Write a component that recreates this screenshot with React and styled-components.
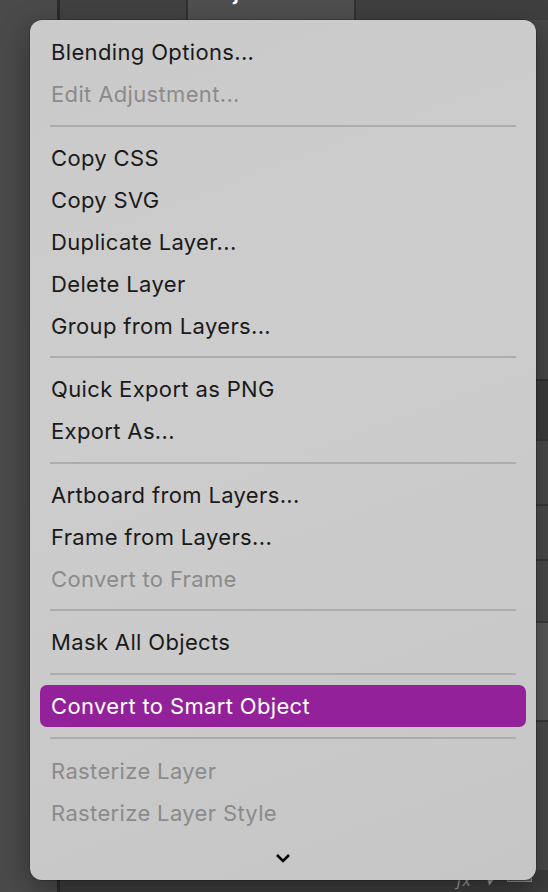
import React from 'react'
import styled, { createGlobalStyle } from 'styled-components'

const GlobalStyle = createGlobalStyle`
  html, body {
    margin: 0;
    padding: 0;
    background: #4a4a4a;
    overflow: hidden;
  }
  * {
    box-sizing: border-box;
  }
`

const Screen = styled.div`
  position: relative;
  width: 548px;
  height: 892px;
  overflow: hidden;
  display: flex;
  font-family: Inter, "Liberation Sans", sans-serif;
`

const Gutter = styled.div`
  width: 57px;
  background: #4a4a4a;
`

const Rule = styled.div`
  width: 3px;
  background: #2c2c2c;
`

const Panel = styled.div`
  flex: 1;
  display: flex;
  flex-direction: column;
`

const TabBar = styled.div`
  height: 20px;
  display: flex;
  background: #3f3f3f;
`

const Tab = styled.div`
  width: ${p => p.width}px;
  overflow: hidden;
  background: ${p => (p.active ? '#4f4f4f' : '#414141')};
  color: ${p => (p.active ? '#ffffff' : '#a8a8a8')};
  border-right: 2px solid #303030;
  font-size: 22px;
  line-height: 22px;
  font-weight: ${p => (p.active ? 600 : 400)};
  text-align: center;
  span {
    display: block;
    margin-top: -19px;
  }
`

const Band = styled.div`
  height: ${p => p.h}px;
  background: ${p => p.bg};
  border-top: ${p => (p.line ? `2px solid ${p.line}` : 'none')};
`

const Footer = styled.div`
  flex: 1;
  background: #3d3d3d;
  display: flex;
  align-items: flex-end;
  justify-content: flex-end;
  gap: 14px;
  padding: 0 16px 2px 0;
  color: #9a9a9a;
  font-size: 16px;
  font-style: italic;
`

const Swatch = styled.div`
  width: 25px;
  height: 12px;
  margin-bottom: 8px;
  background: #5e5e5e;
  border: 1px solid #8a8a8a;
`

const Menu = styled.div`
  position: absolute;
  left: 30px;
  top: 20px;
  width: 506px;
  height: 860px;
  padding: 11px 10px 0;
  border-radius: 12px;
  background: linear-gradient(160deg, #cacaca 0%, #cdcdcd 40%, #c6c6c6 100%);
  box-shadow: 0 0 0 0.5px rgba(0, 0, 0, 0.35), 0 10px 30px rgba(0, 0, 0, 0.35);
  display: flex;
  flex-direction: column;
`

const Item = styled.div`
  height: 42px;
  display: flex;
  align-items: center;
  padding-left: 11px;
  border-radius: 7px;
  font-size: 22px;
  letter-spacing: 0.35px;
  color: ${p => (p.selected ? '#ffffff' : p.disabled ? '#8b8b8b' : '#1a1a1a')};
  background: ${p => (p.selected ? '#93229a' : 'transparent')};
`

const Separator = styled.div`
  height: ${p => (p.wide ? 23 : 21.5)}px;
  display: flex;
  align-items: center;
  padding: 0 10px;
  &::after {
    content: '';
    flex: 1;
    height: 2px;
    background: #adadad;
  }
`

const More = styled.div`
  flex: 1;
  display: flex;
  align-items: center;
  justify-content: center;
  padding-top: 2px;
`

const groups = [
  [['Blending Options...'], ['Edit Adjustment...', 'disabled']],
  [['Copy CSS'], ['Copy SVG'], ['Duplicate Layer...'], ['Delete Layer'], ['Group from Layers...']],
  [['Quick Export as PNG'], ['Export As...']],
  [['Artboard from Layers...'], ['Frame from Layers...'], ['Convert to Frame', 'disabled']],
  [['Mask All Objects']],
  [['Convert to Smart Object', 'selected']],
  [['Rasterize Layer', 'disabled'], ['Rasterize Layer Style', 'disabled']],
]

export default function App() {
  return (
    <>
      <GlobalStyle />
      <Screen>
        <Gutter />
        <Rule />
        <Panel>
          <TabBar>
            <Tab width={128}><span>Paths</span></Tab>
            <Tab width={168} active><span>Adjustments</span></Tab>
          </TabBar>
          <Band h={360} bg="#474747" />
          <Band h={60} bg="#3c3c3c" line="#2f2f2f" />
          <Band h={65} bg="#4a4a4a" line="#383838" />
          <Band h={55} bg="#4a4a4a" line="#383838" />
          <Band h={62} bg="#4a4a4a" line="#383838" />
          <Band h={100} bg="#5a5a5a" line="#3a3a3a" />
          <Band h={150} bg="#4a4a4a" line="#383838" />
          <Footer>
            <span>fx</span>
            <span>▾</span>
            <Swatch />
          </Footer>
        </Panel>

        <Menu>
          {groups.map((group, gi) => (
            <React.Fragment key={gi}>
              {gi > 0 && <Separator wide={gi === groups.length - 1} />}
              {group.map(([label, state]) => (
                <Item
                  key={label}
                  disabled={state === 'disabled'}
                  selected={state === 'selected'}
                >
                  {label}
                </Item>
              ))}
            </React.Fragment>
          ))}
          <More>
            <svg width="16" height="10" viewBox="0 0 16 10">
              <path d="M2 2 L8 8 L14 2" fill="none" stroke="#000" strokeWidth="2.6" />
            </svg>
          </More>
        </Menu>
      </Screen>
    </>
  )
}
